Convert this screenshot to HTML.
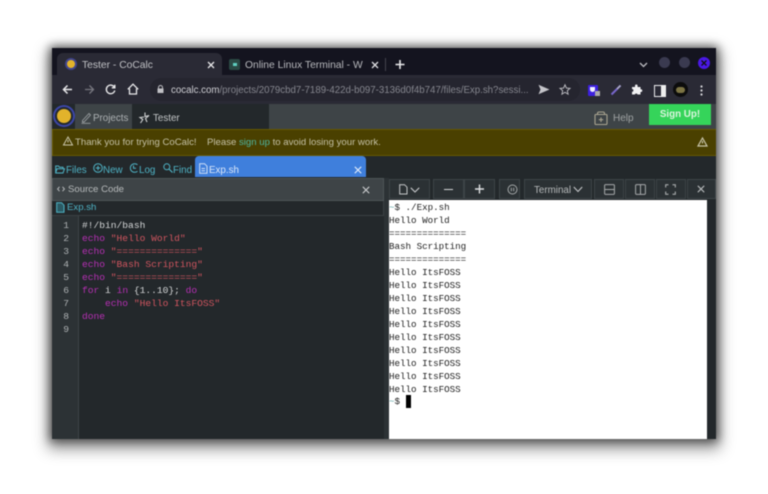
<!DOCTYPE html>
<html><head><meta charset="utf-8">
<style>
html,body{margin:0;padding:0;width:768px;height:494px;overflow:hidden;background:#fff}
#w{position:absolute;left:52px;top:48px;width:664px;height:391px;background:#23282b;box-shadow:0 0 9px 2px rgba(0,0,0,.55),0 6px 14px 4px rgba(0,0,0,.42);}
#r{position:absolute;left:0;top:0;width:768px;height:494px;filter:blur(.55px);font-family:"Liberation Sans",sans-serif}
.a{position:absolute;white-space:pre}
.m{font-family:"Liberation Mono",monospace}
.c{font-size:9.6px;line-height:13px;height:13px;color:#d4d6d7}
.t{font-size:9.2px;line-height:13px;height:13px;color:#222;left:389px}
.n{font-size:9.6px;line-height:13px;color:#aeb2b4;left:52px;width:17px;text-align:right}
.p{color:#b52fb3}.s{color:#d0555f}
.b{position:absolute;top:179px;height:20px;background:#2b3134;border:1px solid #3d4447;box-sizing:border-box}
svg{position:absolute;overflow:visible}
</style></head><body>
<div id="r">
<div id="w"></div>
<!-- tab strip -->
<div class="a" style="left:52px;top:48px;width:664px;height:27px;background:#14141f"></div>
<div class="a" style="left:57px;top:53px;width:165px;height:22px;background:#2a2a35;border-radius:6px 6px 0 0"></div>
<div class="a" style="left:65px;top:58px;width:12px;height:12px;border-radius:50%;background:#40458f"></div>
<div class="a" style="left:67px;top:60px;width:8px;height:8px;border-radius:50%;background:#e2b32b"></div>
<div class="a" style="left:82px;top:59px;font-size:10.3px;line-height:13px;color:#c0c1c5">Tester - CoCalc</div>
<svg style="left:207px;top:61px" width="8" height="8"><path d="M1 1L7 7M7 1L1 7" stroke="#e6e6e8" stroke-width="1.300"/></svg>
<div class="a" style="left:229px;top:59px;width:11px;height:11px;border-radius:2px;background:#2b4a44"></div>
<div class="a" style="left:233px;top:63px;width:4px;height:3px;background:#5fd0c0"></div>
<div class="a" style="left:245px;top:59px;width:119px;overflow:hidden;font-size:10.3px;line-height:13px;color:#b8b9bd">Online Linux Terminal - W</div>
<svg style="left:371px;top:61px" width="8" height="8"><path d="M1 1L7 7M7 1L1 7" stroke="#dcdce0" stroke-width="1.300"/></svg>
<div class="a" style="left:385px;top:58px;width:1px;height:13px;background:#44444e"></div>
<svg style="left:395px;top:60px" width="10" height="10"><path d="M5 0V9M.5 4.500H9.500" stroke="#e8e8ea" stroke-width="1.600" fill="none"/></svg>
<svg style="left:639px;top:62px" width="9" height="6"><path d="M1 1L4.500 4.500L8 1" stroke="#bdbdc2" stroke-width="1.300" fill="none"/></svg>
<div class="a" style="left:659px;top:57px;width:11px;height:11px;border-radius:50%;background:#3a3a50"></div>
<div class="a" style="left:679px;top:57px;width:11px;height:11px;border-radius:50%;background:#3a3a50"></div>
<div class="a" style="left:698px;top:57px;width:12px;height:12px;border-radius:50%;background:#4a18e6"></div>
<svg style="left:701px;top:60px" width="6" height="6"><path d="M.5 .5L5.500 5.500M5.500 .5L.5 5.500" stroke="#111" stroke-width="1.300"/></svg>
<!-- toolbar -->
<div class="a" style="left:52px;top:75px;width:664px;height:29px;background:#2a2a35"></div>
<div class="a" style="left:150px;top:78px;width:430px;height:23px;border-radius:12px;background:#25252f"></div>
<svg style="left:62px;top:84px" width="11" height="11"><path d="M10 5.500H1.500M5.500 1.500L1.500 5.500L5.500 9.500" stroke="#e8e8ea" stroke-width="1.500" fill="none"/></svg>
<svg style="left:84px;top:84px" width="11" height="11"><path d="M1 5.500H9.500M5.500 1.500L9.500 5.500L5.500 9.500" stroke="#77777f" stroke-width="1.300" fill="none"/></svg>
<svg style="left:105px;top:84px" width="11" height="11"><path d="M9.500 3.500A4.300 4.300 0 1 0 9.800 6.500M9.800 .8V3.800H6.800" stroke="#e8e8ea" stroke-width="1.400" fill="none"/></svg>
<svg style="left:127px;top:83px" width="12" height="12"><path d="M.8 6.300L6 1.200L11.200 6.300M2.500 5.500V11H9.500V5.500" stroke="#e8e8ea" stroke-width="1.300" fill="none"/></svg>
<svg style="left:157px;top:85px" width="7" height="9"><path d="M1.500 3.500V2.500A2 2 0 0 1 5.500 2.500V3.500" stroke="#c0c0c5" fill="none"/><rect x=".5" y="3.500" width="6" height="4.500" fill="#c0c0c5"/></svg>
<div class="a" style="left:171px;top:84px;width:358px;overflow:hidden;font-size:9.7px;line-height:13px;color:#85868e"><span style="color:#cfcfd4">cocalc.com</span>/projects/2079cbd7-7189-422d-b097-3136d0f4b747/files/Exp.sh?sessi...</div>
<svg style="left:538px;top:84px" width="12" height="11"><path d="M.5 .8L11.500 5.500L.5 10.200L2.500 5.500Z" fill="#c4c4c9"/></svg>
<svg style="left:559px;top:84px" width="12" height="11"><path d="M6 .8L7.400 4.100L11 4.400L8.300 6.700L9.100 10.200L6 8.300L2.900 10.200L3.700 6.700L1 4.400L4.600 4.100Z" stroke="#c4c4c9" stroke-width=".9" fill="none"/></svg>
<div class="a" style="left:588px;top:85px;width:10px;height:11px;background:#3d20e0;border-radius:1px"></div>
<div class="a" style="left:590px;top:87px;width:5px;height:5px;background:#f0f0ff;border-radius:0 0 3px 3px"></div>
<div class="a" style="left:595px;top:91px;width:5px;height:5px;background:#aaa"></div>
<svg style="left:610px;top:84px" width="12" height="12"><path d="M1.500 10.500L10.500 1.500" stroke="#7766cc" stroke-width="2"/><path d="M7 5L10.500 1.500" stroke="#b0b0c0" stroke-width="1.500"/></svg>
<svg style="left:631px;top:84px" width="12" height="11"><path d="M1 3H4V1.800A1.300 1.300 0 0 1 6.600 1.800V3H9.500V5.300H10.300A1.400 1.400 0 0 1 10.300 8H9.500V10.500H6.600A1.500 1.500 0 0 0 3.800 10.500H1V7.800A1.400 1.400 0 0 0 1 5Z" fill="#f0f0f2"/></svg>
<div class="a" style="left:654px;top:85px;width:10px;height:10px;border:1.300px solid #eee;box-sizing:content-box;background:linear-gradient(90deg,#2a2a35 60%,#eee 60%)"></div>
<div class="a" style="left:673px;top:82px;width:15px;height:15px;border-radius:50%;background:#0c0c0c"></div>
<div class="a" style="left:676px;top:87px;width:9px;height:6px;border-radius:3px;background:#7c7444"></div>
<svg style="left:700px;top:85px" width="3" height="11"><circle cx="1.500" cy="1.500" r="1.100" fill="#d8d8dc"/><circle cx="1.500" cy="5.500" r="1.100" fill="#d8d8dc"/><circle cx="1.500" cy="9.500" r="1.100" fill="#d8d8dc"/></svg>
<!-- nav -->
<div class="a" style="left:52px;top:104px;width:664px;height:25px;background:#3e4447"></div>
<div class="a" style="left:52px;top:104px;width:23px;height:25px;background:#23282b"></div>
<div class="a" style="left:132px;top:104px;width:137px;height:25px;background:#23282b"></div>
<div class="a" style="left:53px;top:105px;width:22px;height:22px;border-radius:50%;background:#3c46a8"></div>
<div class="a" style="left:55px;top:107px;width:18px;height:18px;border-radius:50%;background:#23282b"></div>
<div class="a" style="left:57px;top:109px;width:14px;height:14px;border-radius:50%;background:#e2b32b"></div>
<svg style="left:81px;top:112px" width="11" height="12"><path d="M1.500 8.500L8 1.500L9.500 3L3 10H1.500ZM.5 11.300H9.500" stroke="#9a9fa1" stroke-width=".9" fill="none"/></svg>
<div class="a" style="left:93px;top:112px;font-size:9.8px;line-height:13px;color:#aeb2b4">Projects</div>
<svg style="left:139px;top:112px" width="11" height="12"><path d="M6 .5L6 4.500L10 3.500L6.500 6.500L8 10M5 5L1 5.500L3.800 7.500L1.500 11" stroke="#d0d2d3" stroke-width="1.100" fill="none"/></svg>
<div class="a" style="left:153px;top:112px;font-size:9.8px;line-height:13px;color:#c4c7c8">Tester</div>
<svg style="left:594px;top:111px" width="14" height="15"><path d="M3.500 3.500V2.500Q3.500 1 5 1H9Q10.500 1 10.500 2.500V3.500M1.500 3.500H12.500Q13 3.500 13 4.500V12.500Q13 13.500 12 13.500H2Q1 13.500 1 12.500V4.500Q1 3.500 1.500 3.500ZM7 6.500V11M4.800 8.700H9.200" stroke="#a9a490" stroke-width="1.100" fill="none"/></svg>
<div class="a" style="left:613px;top:112px;font-size:10px;line-height:13px;color:#9fa3a3">Help</div>
<div class="a" style="left:649px;top:104px;width:62px;height:21px;background:#35d45a;font-size:9.8px;font-weight:bold;line-height:22px;text-align:center;color:#dcf5df">Sign Up!</div>
<!-- banner -->
<div class="a" style="left:52px;top:129px;width:664px;height:27px;background:#4a4000;border:1px solid #655800;border-right:0;box-sizing:border-box"></div>
<svg style="left:63px;top:136px" width="10" height="10"><path d="M5 1L9.500 9H.5ZM5 4V6.500" stroke="#c8c4a8" fill="none"/></svg>
<div class="a" style="left:75px;top:136px;font-size:9.6px;line-height:13px;color:#c4c0a4">Thank you for trying CoCalc!</div>
<div class="a" style="left:207px;top:136px;font-size:9.6px;line-height:13px;color:#c4c0a4">Please <span style="color:#4eb5a0">sign up</span> to avoid losing your work.</div>
<svg style="left:697px;top:137px" width="11" height="10"><path d="M5.500 1L10 9H1ZM5.500 4V6.500" stroke="#c8c4a8" stroke-width="1.200" fill="none"/></svg>
<!-- project tabs -->
<svg style="left:55px;top:165px" width="10" height="9"><path d="M.7 8V1H3.500L4.500 2.300H8V3.700M.7 8L2 3.700H9.500L8 8Z" stroke="#4fb3c5" fill="none"/></svg>
<div class="a" style="left:66px;top:164px;font-size:9.8px;line-height:13px;color:#4fb3c5">Files</div>
<svg style="left:93px;top:163px" width="10" height="10"><circle cx="5" cy="5" r="4.300" stroke="#4fb3c5" fill="none"/><path d="M5 2.800V7.200M2.800 5H7.200" stroke="#4fb3c5"/></svg>
<div class="a" style="left:103px;top:164px;font-size:9.8px;line-height:13px;color:#4fb3c5">New</div>
<svg style="left:129px;top:163px" width="10" height="10"><path d="M8.500 1.800A4.300 4.300 0 1 0 8.500 8.200M4.500 2.500V5.200H7" stroke="#4fb3c5" fill="none"/></svg>
<div class="a" style="left:139px;top:164px;font-size:9.8px;line-height:13px;color:#4fb3c5">Log</div>
<svg style="left:163px;top:163px" width="10" height="10"><circle cx="3.800" cy="3.800" r="3" stroke="#4fb3c5" fill="none"/><path d="M6 6L9.500 9.500" stroke="#4fb3c5" stroke-width="1.200"/></svg>
<div class="a" style="left:173px;top:164px;font-size:9.8px;line-height:13px;color:#4fb3c5">Find</div>
<div class="a" style="left:195px;top:156px;width:171px;height:21px;background:#3f7fdc;border-radius:4px 4px 0 0"></div>
<svg style="left:199px;top:163px" width="9" height="11"><path d="M.7 .7H5.500L8 3.200V10.300H.7ZM2.500 5.500H6M2.500 7.800H6" stroke="#cfe0f8" fill="none"/></svg>
<div class="a" style="left:209px;top:164px;font-size:9.8px;line-height:13px;color:#dce8fa">Exp.sh</div>
<svg style="left:354px;top:166px" width="8" height="8"><path d="M.8 .8L7.200 7.200M7.200 .8L.8 7.200" stroke="#dce8fa" stroke-width="1.100"/></svg>
<!-- source code bar -->
<div class="a" style="left:52px;top:178px;width:332px;height:23px;background:#3e4447;border:1px solid #4d5457;box-sizing:border-box"></div>
<svg style="left:57px;top:186px" width="8" height="6"><path d="M2.500 .8L.6 3L2.500 5.200M5.500 .8L7.400 3L5.500 5.200" stroke="#b5b8ba" fill="none"/></svg>
<div class="a" style="left:68px;top:183px;font-size:9.6px;line-height:13px;color:#b7babb">Source Code</div>
<svg style="left:362px;top:186px" width="8" height="8"><path d="M.8 .8L7.200 7.200M7.200 .8L.8 7.200" stroke="#c4c6c8" stroke-width="1.100"/></svg>
<!-- file tab -->
<div class="a" style="left:52px;top:201px;width:331px;height:14px;background:#23282b;border-bottom:1px solid #3a4043;border-right:1px solid #3a4043"></div>
<svg style="left:56px;top:202px" width="9" height="11"><path d="M.7 .7H5.500L8 3.200V10.300H.7Z" stroke="#4fb3c5" fill="#2b5a64"/></svg>
<div class="a" style="left:67px;top:201px;font-size:9.600px;line-height:13px;color:#4fb3c5">Exp.sh</div>
<!-- gutter -->
<div class="a" style="left:52px;top:216px;width:26px;height:223px;background:#2c3235;border-right:1px solid #3d4447"></div>
<div class="a" style="left:384px;top:178px;width:5px;height:261px;background:#2c3235"></div>
<div class="a n m" style="top:219px">1</div><div class="a n m" style="top:232px">2</div><div class="a n m" style="top:245px">3</div><div class="a n m" style="top:258px">4</div><div class="a n m" style="top:271px">5</div><div class="a n m" style="top:284px">6</div><div class="a n m" style="top:297px">7</div><div class="a n m" style="top:310px">8</div><div class="a n m" style="top:323px">9</div>
<div class="a c m" style="left:82px;top:219px">#!/bin/bash</div>
<div class="a c m" style="left:82px;top:232px"><span class="p">echo</span> <span class="s">"Hello World"</span></div>
<div class="a c m" style="left:82px;top:245px"><span class="p">echo</span> <span class="s">"=============="</span></div>
<div class="a c m" style="left:82px;top:258px"><span class="p">echo</span> <span class="s">"Bash Scripting"</span></div>
<div class="a c m" style="left:82px;top:271px"><span class="p">echo</span> <span class="s">"=============="</span></div>
<div class="a c m" style="left:82px;top:284px"><span class="p">for</span> i <span class="p">in</span> {1..10}; <span class="p">do</span></div>
<div class="a c m" style="left:82px;top:297px">    <span class="p">echo</span> <span class="s">"Hello ItsFOSS"</span></div>
<div class="a c m" style="left:82px;top:310px"><span class="p">done</span></div>
<!-- terminal toolbar -->
<div class="b" style="left:389px;width:41px"></div>
<div class="b" style="left:433px;width:31px"></div>
<div class="b" style="left:464px;width:31px"></div>
<div class="b" style="left:499px;width:21px"></div>
<div class="b" style="left:524px;width:68px"></div>
<div class="b" style="left:594px;width:30px"></div>
<div class="b" style="left:625px;width:30px"></div>
<div class="b" style="left:656px;width:30px"></div>
<div class="b" style="left:687px;width:29px"></div>
<svg style="left:399px;top:184px" width="9" height="11"><path d="M.7 .7H5.500L8 3.200V10H.7Z" stroke="#c4c6c8" fill="none"/></svg>
<svg style="left:410px;top:187px" width="10" height="6"><path d="M.8 .8L5 5L9.200 .8" stroke="#c4c6c8" stroke-width="1.100" fill="none"/></svg>
<div class="a" style="left:444px;top:188.500px;width:9px;height:1.500px;background:#d4d6d7"></div>
<svg style="left:475px;top:184px" width="9" height="10"><path d="M4.500 .5V9.500M0 5H9" stroke="#e0e2e3" stroke-width="1.400"/></svg>
<svg style="left:507px;top:184px" width="11" height="11"><circle cx="5.500" cy="5.500" r="4.500" stroke="#a6a9aa" fill="none"/><path d="M4.300 3.800V7.200M6.700 3.800V7.200" stroke="#a6a9aa"/></svg>
<div class="a" style="left:534px;top:184px;font-size:9.8px;line-height:13px;color:#b7babb">Terminal</div>
<svg style="left:573px;top:186px" width="10" height="7"><path d="M.8 1L5 5.500L9.200 1" stroke="#c4c6c8" stroke-width="1.100" fill="none"/></svg>
<svg style="left:604px;top:184px" width="11" height="11"><rect x=".6" y=".6" width="9.800" height="9.800" rx="1" stroke="#a6a9aa" fill="none"/><path d="M.6 5.500H10.400" stroke="#a6a9aa"/></svg>
<svg style="left:635px;top:184px" width="11" height="11"><rect x=".6" y=".6" width="9.800" height="9.800" rx="1" stroke="#a6a9aa" fill="none"/><path d="M5.500 .6V10.400" stroke="#a6a9aa"/></svg>
<svg style="left:665px;top:184px" width="11" height="11"><path d="M.7 3.500V.7H3.500M7.500 .7H10.300V3.500M.7 7.500V10.300H3.500M7.500 10.300H10.300V7.500" stroke="#b4b7b8" fill="none"/></svg>
<svg style="left:697px;top:185px" width="8" height="8"><path d="M.8 .8L7.200 7.200M7.200 .8L.8 7.200" stroke="#b4b7b8" stroke-width="1.100"/></svg>
<!-- terminal -->
<div class="a" style="left:389px;top:200px;width:318px;height:239px;background:#fff"></div>
<div class="a t m" style="top:201px"><span style="color:#6aa">~</span>$ ./Exp.sh</div>
<div class="a t m" style="top:214px">Hello World</div>
<div class="a t m" style="top:227px">==============</div>
<div class="a t m" style="top:240px">Bash Scripting</div>
<div class="a t m" style="top:253px">==============</div>
<div class="a t m" style="top:266px">Hello ItsFOSS</div>
<div class="a t m" style="top:279px">Hello ItsFOSS</div>
<div class="a t m" style="top:292px">Hello ItsFOSS</div>
<div class="a t m" style="top:305px">Hello ItsFOSS</div>
<div class="a t m" style="top:318px">Hello ItsFOSS</div>
<div class="a t m" style="top:331px">Hello ItsFOSS</div>
<div class="a t m" style="top:344px">Hello ItsFOSS</div>
<div class="a t m" style="top:357px">Hello ItsFOSS</div>
<div class="a t m" style="top:370px">Hello ItsFOSS</div>
<div class="a t m" style="top:383px">Hello ItsFOSS</div>
<div class="a t m" style="top:395px"><span style="color:#6aa">~</span>$</div>
<div class="a" style="left:406px;top:395px;width:5px;height:13px;background:#000"></div>
</div>
</body></html>
